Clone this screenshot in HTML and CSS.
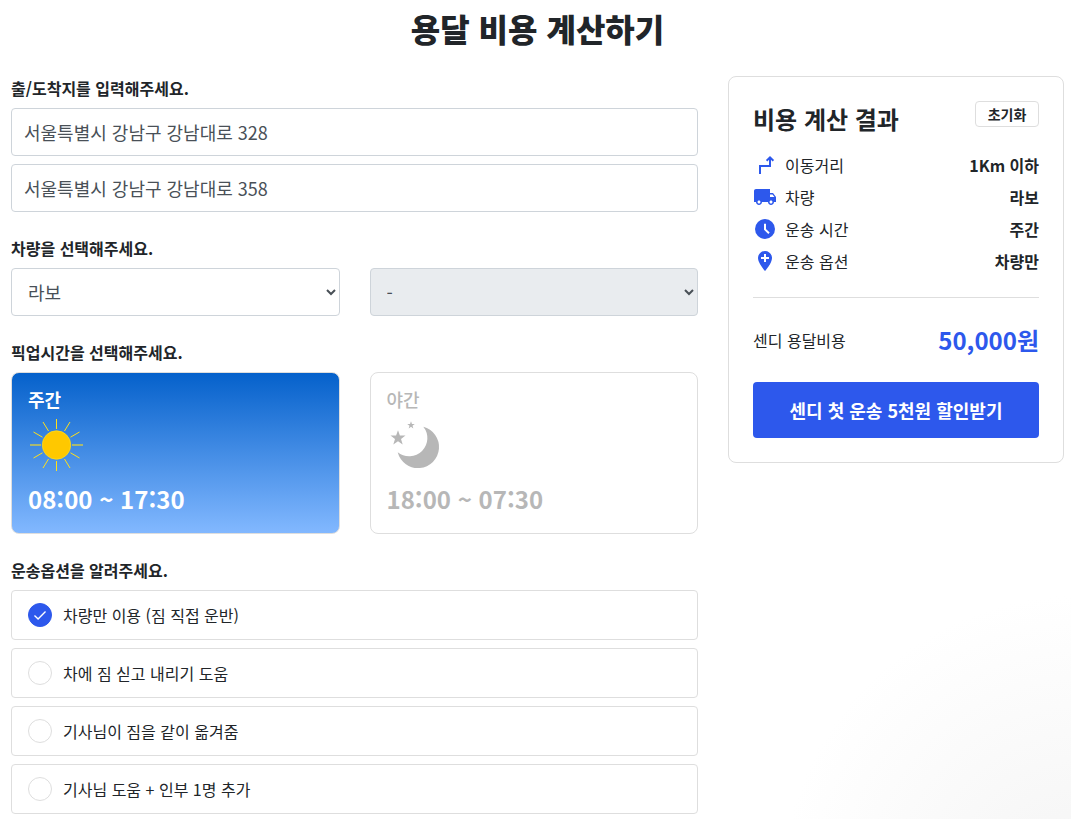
FILE: index.html
```html
<!DOCTYPE html>
<html lang="ko">
<head>
<meta charset="utf-8">
<meta name="viewport" content="width=device-width, initial-scale=1">
<title>용달 비용 계산하기</title>
<link rel="stylesheet" href="styles.css">
</head>
<body>
<main class="page">
  <h1 class="page-title">용달 비용 계산하기</h1>
  <div class="layout">
    <form class="form">
      <fieldset class="group">
        <legend class="group-title">출/도착지를 입력해주세요.</legend>
        <div class="stack">
          <input class="field" type="text" aria-label="출발지" value="서울특별시 강남구 강남대로 328">
          <input class="field" type="text" aria-label="도착지" value="서울특별시 강남구 강남대로 358">
        </div>
      </fieldset>
      <fieldset class="group">
        <legend class="group-title">차량을 선택해주세요.</legend>
        <div class="pair">
          <select class="field" aria-label="차량"><option>라보</option></select>
          <select class="field" aria-label="차량 상세" disabled><option>-</option></select>
        </div>
      </fieldset>
      <fieldset class="group">
        <legend class="group-title">픽업시간을 선택해주세요.</legend>
        <div class="pair">
          <label class="time time-day">
            <input class="hidden-radio" type="radio" name="time" checked>
            <span class="time-name">주간</span>
            <svg class="time-icon" viewBox="0 0 56 56" aria-hidden="true">
              <g stroke="#ffe01a" stroke-width="1">
                <path d="M28.5 2v10M28.5 44v10M15 5l5.500 9M42 5l-5.500 9M15 51l5.500-9M42 51l-5.500-9M5.500 15l9 5.200M51.500 15l-9 5.200M5.500 41l9-5.200M51.500 41l-9-5.200"/>
                <path d="M2 28h11M44 28h11" stroke-width="2" opacity=".55"/>
              </g>
              <circle cx="28.500" cy="28" r="14.200" fill="#ffc800" stroke="#ffdc1a" stroke-width=".8"/>
            </svg>
            <span class="time-range">08:00 ~ 17:30</span>
          </label>
          <label class="time">
            <input class="hidden-radio" type="radio" name="time">
            <span class="time-name">야간</span>
            <svg class="time-icon" viewBox="0 0 56 56" fill="#b7b7b7" aria-hidden="true">
              <path d="M36.300 9.700A21 21 0 1 1 10.700 35.300A18.200 18.200 0 0 0 36.300 9.700Z"/>
              <path d="M11 13.200l1.900 5.400h5.600l-4.500 3.500 1.700 5.500-4.700-3.300-4.700 3.300 1.700-5.500-4.500-3.500h5.600z"/>
              <path d="M24 4.300l.95 2.700h2.800l-2.250 1.700.85 2.800-2.350-1.700-2.350 1.700.85-2.800-2.250-1.700h2.800z"/>
            </svg>
            <span class="time-range">18:00 ~ 07:30</span>
          </label>
        </div>
      </fieldset>
      <fieldset class="group">
        <legend class="group-title">운송옵션을 알려주세요.</legend>
        <div class="stack">
          <label class="option"><input class="option-radio" type="radio" name="option" checked>차량만 이용 (짐 직접 운반)</label>
          <label class="option"><input class="option-radio" type="radio" name="option">차에 짐 싣고 내리기 도움</label>
          <label class="option"><input class="option-radio" type="radio" name="option">기사님이 짐을 같이 옮겨줌</label>
          <label class="option"><input class="option-radio" type="radio" name="option">기사님 도움 + 인부 1명 추가</label>
        </div>
      </fieldset>
    </form>
    <aside class="result">
      <header class="result-head">
        <h2 class="result-title">비용 계산 결과</h2>
        <button class="reset" type="button">초기화</button>
      </header>
      <dl class="summary">
        <div class="row">
          <dt class="row-name"><svg class="row-icon" viewBox="0 0 24 24" fill="none" stroke="#2d58ec" stroke-width="2" aria-hidden="true"><path d="M7 21v-8h10V5M13.600 7.800L17 4.400l3.400 3.400"/></svg>이동거리</dt>
          <dd class="row-value">1Km 이하</dd>
        </div>
        <div class="row">
          <dt class="row-name"><svg class="row-icon" viewBox="0 0 24 24" fill="#2d58ec" aria-hidden="true"><path d="M20 8h-3V4H3c-1.100 0-2 .9-2 2v11h2c0 1.660 1.340 3 3 3s3-1.340 3-3h6c0 1.660 1.340 3 3 3s3-1.340 3-3h2v-5l-3-4zM6 18.500c-.83 0-1.500-.67-1.500-1.500s.67-1.500 1.500-1.500 1.500.67 1.500 1.500-.67 1.500-1.500 1.500zm13.500-9l1.960 2.500H17V9.500h2.500zm-1.500 9c-.83 0-1.500-.67-1.500-1.500s.67-1.500 1.500-1.500 1.500.67 1.500 1.500-.67 1.500-1.500 1.500z"/></svg>차량</dt>
          <dd class="row-value">라보</dd>
        </div>
        <div class="row">
          <dt class="row-name"><svg class="row-icon" viewBox="0 0 24 24" aria-hidden="true"><circle cx="12" cy="12" r="10" fill="#2d58ec"/><path d="M12 6.800v5.600l4 3.800" fill="none" stroke="#fff" stroke-width="2"/></svg>운송 시간</dt>
          <dd class="row-value">주간</dd>
        </div>
        <div class="row">
          <dt class="row-name"><svg class="row-icon" viewBox="0 0 24 24" aria-hidden="true"><path d="M12 2C8.140 2 5 5.140 5 9c0 5.250 7 13 7 13s7-7.750 7-13c0-3.860-3.140-7-7-7z" fill="#2d58ec"/><path d="M12 5v8M8 9h8" stroke="#fff" stroke-width="2"/></svg>운송 옵션</dt>
          <dd class="row-value">차량만</dd>
        </div>
      </dl>
      <div class="total">
        <span>센디 용달비용</span>
        <strong class="price">50,000원</strong>
      </div>
      <button class="cta" type="button">센디 첫 운송 5천원 할인받기</button>
    </aside>
  </div>
</main>
</body>
</html>
```
FILE: styles.css
```css
* { box-sizing: border-box; }

body {
  margin: 0;
  min-height: 100vh;
  color: #212529;
  background:
    radial-gradient(circle 300px at calc(100% + 9px) calc(100% + 76px), #f4f4f4, #fff) no-repeat fixed,
    #fff;
  font: 16px/24px "Noto Sans CJK KR", "Noto Sans", sans-serif;
}

.page { padding: 8px 7px 5px 11px; }

.page-title {
  margin: 0 0 28px;
  font-size: 32px;
  line-height: 40px;
  font-weight: 900;
  text-align: center;
}

.layout {
  display: grid;
  grid-template-columns: minmax(0, 1fr) 336px;
  gap: 30px;
  align-items: start;
}

.form { display: grid; gap: 24px; }

.group { margin: 0; padding: 0; border: 0; min-width: 0; }
.group-title { padding: 0; margin-bottom: 8px; font-weight: 700; }

.stack { display: grid; gap: 8px; }
.pair { display: grid; grid-template-columns: 1fr 1fr; gap: 30px; }

.field {
  width: 100%;
  height: 48px;
  padding: 0 12px;
  border: 1px solid #ced4da;
  border-radius: 4px;
  background: #fff;
  color: #495057;
  font: inherit;
  font-size: 18px;
}
.field:disabled { background: #e9ecef; color: #495057; opacity: 1; }

.hidden-radio { position: absolute; opacity: 0; }

.time {
  display: flex;
  flex-direction: column;
  padding: 16px;
  border: 1px solid #dedede;
  border-radius: 8px;
  color: #b7b7b7;
}
.time-day {
  color: #fff;
  background: linear-gradient(#0561cb, #82b8ff);
}
.time-name { font-size: 18px; line-height: 20px; font-weight: 500; }
.time-day .time-name { font-weight: 700; }
.time-icon { width: 56px; height: 56px; margin: 8px 0; }
.time-range { font-size: 24px; line-height: 36px; font-weight: 700; }

.option {
  display: flex;
  align-items: center;
  gap: 11px;
  height: 50px;
  padding: 0 16px;
  border: 1px solid #dedede;
  border-radius: 4px;
  background: #fff;
}
.option-radio {
  appearance: none;
  width: 24px;
  height: 24px;
  margin: 0;
  border: 1px solid #dedede;
  border-radius: 50%;
  display: grid;
  place-items: center;
}
.option-radio:checked { background: #2d58ec; border-color: #2d58ec; }
.option-radio:checked::before {
  content: "";
  width: 12px;
  height: 12px;
  background: #fff;
  clip-path: polygon(8% 50%, 0 58%, 34% 92%, 100% 24%, 92% 16%, 34% 76%);
}

.result {
  padding: 24px;
  border: 1px solid #dedede;
  border-radius: 8px;
  background: #fff;
}
.result-head {
  display: flex;
  justify-content: space-between;
  align-items: flex-start;
  margin-bottom: 16px;
}
.result-title { margin: 0; font-size: 24px; line-height: 36px; font-weight: 700; }
.reset {
  width: 64px;
  height: 26px;
  padding: 0;
  border: 1px solid #dedede;
  border-radius: 4px;
  background: #fff;
  color: #212529;
  font: inherit;
  font-size: 14px;
  line-height: 24px;
  font-weight: 700;
}

.summary {
  display: grid;
  gap: 8px;
  margin: 0 0 24px;
  padding-bottom: 24px;
  border-bottom: 1px solid #dedede;
}
.row { display: flex; justify-content: space-between; }
.row-name { display: flex; gap: 8px; }
.row-icon { width: 24px; height: 24px; }
.row-value { margin: 0; font-weight: 700; }

.total {
  display: flex;
  justify-content: space-between;
  align-items: center;
  margin-bottom: 24px;
}
.price { color: #2d58ec; font-size: 24px; line-height: 36px; font-weight: 700; }

.cta {
  display: block;
  width: 100%;
  height: 56px;
  border: 0;
  border-radius: 4px;
  background: #2d58ec;
  color: #fff;
  font: inherit;
  font-size: 18px;
  font-weight: 700;
}
```
